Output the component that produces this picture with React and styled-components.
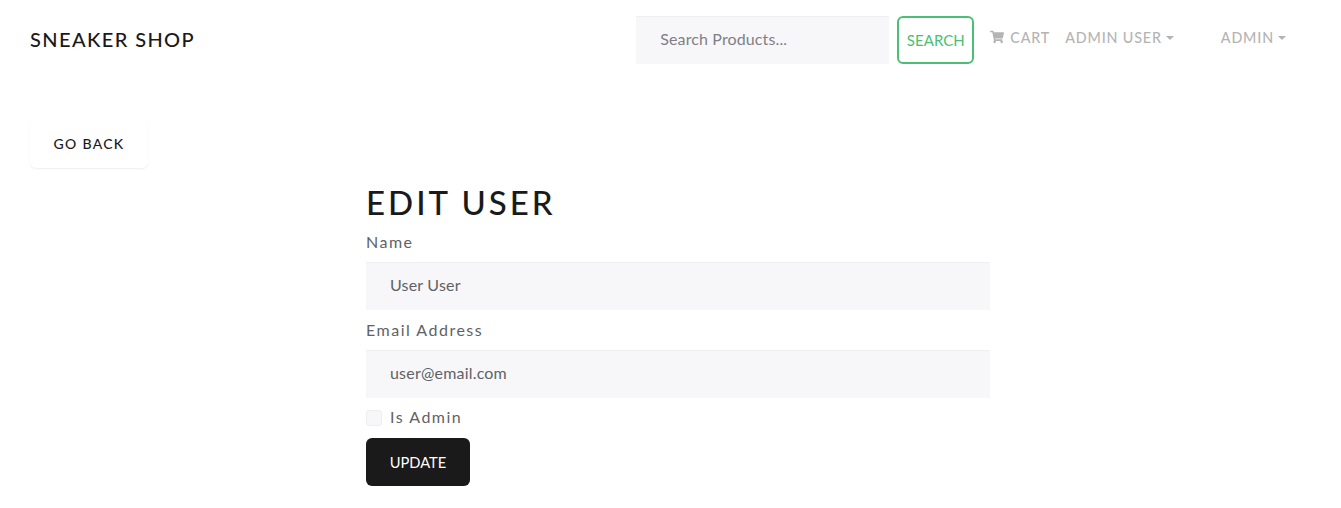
import React from "react";
import styled, { createGlobalStyle } from "styled-components";
import { FaShoppingCart } from "react-icons/fa";

const Global = createGlobalStyle`
  html, body { margin: 0; padding: 0; background: #fff; }
  body { font-family: "Lato", "Open Sans", sans-serif; color: #55595c; font-size: 16px; }
  * { box-sizing: border-box; }
`;
const Page = styled.div`width: 1341px; height: 508px; overflow: hidden;`;
const Navbar = styled.nav`
  height: 80px; padding: 16px 55px 16px 30px; display: flex; align-items: flex-start; justify-content: space-between;
`;
const Brand = styled.a`
  font-size: 20px; line-height: 46px; letter-spacing: 1.4px; color: #1a1a1a; font-weight: 500; white-space: nowrap;
`;
const NavRight = styled.div`display: flex; align-items: flex-start;`;
const SearchForm = styled.form`display: flex; gap: 8px; margin-right: 16px;`;
const SearchInput = styled.div`
  width: 253px; height: 48px; background: #f7f7f9; box-shadow: inset 0 1px 0 #efeff1; padding: 0 24px 4px;
  display: flex; align-items: center; font-size: 16px; letter-spacing: .12px; color: #7f7f85;
`;
const SearchButton = styled.button`
  width: 77px; height: 48px; background: #fff; border: 2px solid #4bbf73; border-radius: 6px; color: #4bbf73;
  font: 400 15px "Lato", sans-serif; letter-spacing: .05px; padding: 0; text-transform: uppercase; margin: 0;
`;
const NavLink = styled.a`
  display: flex; align-items: center; gap: ${p => p.$gap || 0}px; height: 42px; margin-right: ${p => p.$mr || 0}px;
  color: #b4b4b4; font-size: 14.3px; letter-spacing: .85px; font-weight: 500; white-space: nowrap;
`;
const Caret = styled.span`
  width: 0; height: 0; margin-left: 4px; margin-top: 1px;
  border-top: 4px solid #b4b4b4; border-left: 4px solid transparent; border-right: 4px solid transparent;
`;
const Main = styled.main`padding: 40px 30px 0;`;
const BackButton = styled.button`
  display: block; width: 118px; height: 48px; background: #fff; border: 0; border-radius: 6px; padding: 0 0 2px;
  box-shadow: 0 1px 2px rgba(0,0,0,.07); color: #1a1a1a; font: 500 14px "Lato", sans-serif; letter-spacing: 1.3px;
`;
const FormWrap = styled.div`width: 624px; margin: 16px 0 0 336px;`;
const Title = styled.h1`
  margin: 0; padding-bottom: 2px; font-size: 33px; line-height: 36px; font-weight: 500; letter-spacing: 3px; color: #1a1a1a;
`;
const Label = styled.label`
  display: block; margin-top: 9px; font-size: 16px; line-height: 22px; letter-spacing: 1.5px; color: #5f6265;
`;
const Field = styled.div`
  height: 48px; margin: 9px 0 0; background: #f7f7f9; box-shadow: inset 0 1px 0 #efeff1; padding: 0 24px 4px;
  display: flex; align-items: center; font-size: 16px; letter-spacing: .2px; color: #5f6265;
`;
const CheckRow = styled.div`display: flex; align-items: center; gap: 8px; height: 22px; margin-top: 9px;`;
const Check = styled.span`
  width: 16px; height: 16px; background: #f7f7f9; border: 1px solid #eeeef0; border-radius: 3px;
`;
const CheckLabel = styled.span`font-size: 16px; line-height: 20px; padding-bottom: 2px; letter-spacing: 1.5px; color: #5f6265;`;
const Update = styled.button`
  display: block; margin-top: 9px; width: 104px; height: 48px; background: #1a1a1a; border: 0; border-radius: 6px;
  color: #fff; font: 400 14.7px "Lato", sans-serif; padding: 0;
`;

export default function App() {
  return (
    <Page>
      <Global />
      <Navbar>
        <Brand>SNEAKER SHOP</Brand>
        <NavRight>
          <SearchForm>
            <SearchInput>Search Products...</SearchInput>
            <SearchButton type="button">Search</SearchButton>
          </SearchForm>
          <NavLink $gap={6} $mr={15}><FaShoppingCart size={14} />CART</NavLink>
          <NavLink $mr={47}>ADMIN USER<Caret /></NavLink>
          <NavLink>ADMIN<Caret /></NavLink>
        </NavRight>
      </Navbar>
      <Main>
        <BackButton type="button">GO BACK</BackButton>
        <FormWrap>
          <Title>EDIT USER</Title>
          <Label>Name</Label>
          <Field>User User</Field>
          <Label>Email Address</Label>
          <Field>user@email.com</Field>
          <CheckRow><Check /><CheckLabel>Is Admin</CheckLabel></CheckRow>
          <Update type="button">UPDATE</Update>
        </FormWrap>
      </Main>
    </Page>
  );
}
